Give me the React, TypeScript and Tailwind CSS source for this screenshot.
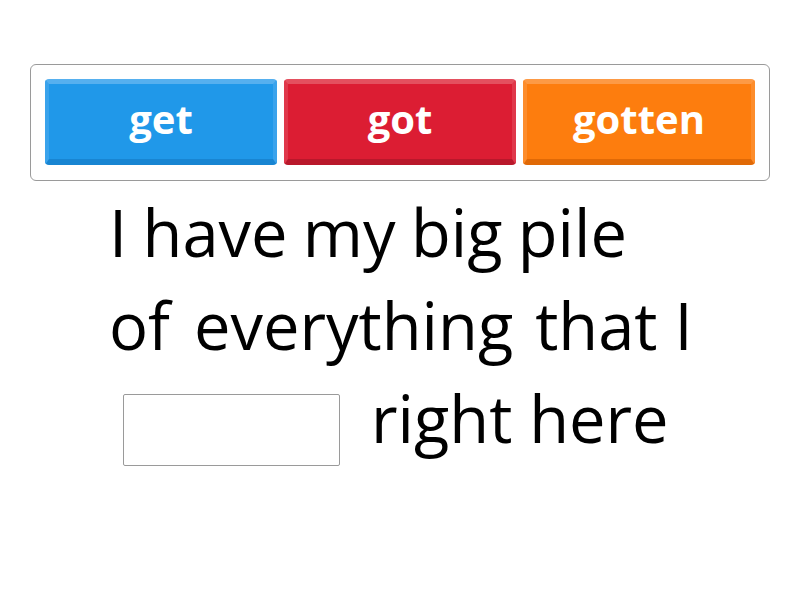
export default function App() {
  const btn =
    "flex-1 h-[86px] rounded-[4px] border-t-[5px] border-x-[4px] border-b-[6px] flex items-center justify-center text-white font-bold text-[40px] leading-none";
  return (
    <div
      className="w-[800px] h-[600px] bg-white pt-[64px]"
      style={{ fontFamily: '"Open Sans", sans-serif' }}
    >
      <div className="mx-[30px] w-[740px] h-[117px] border border-[#9a9a9a] rounded-[6px] px-[14px] pt-[14px] flex gap-[7px]">
        <div className={`${btn} bg-[#2098e9] border-t-[#56b0ef] border-x-[#3aa3ec] border-b-[#1885d2]`}>
          <span className="-mt-[6px]">get</span>
        </div>
        <div className={`${btn} bg-[#dc1d33] border-t-[#e4505f] border-x-[#e0384b] border-b-[#b9182b]`}>
          <span className="-mt-[6px]">got</span>
        </div>
        <div className={`${btn} bg-[#fd7d0e] border-t-[#fd9a45] border-x-[#fd8d2c] border-b-[#e06906]`}>
          <span className="-mt-[6px]">gotten</span>
        </div>
      </div>
      <div className="mt-[5px] pl-[109px] text-black text-[65px] leading-[93px]">
        <div className="h-[93px] whitespace-pre [word-spacing:-1.5px]">I have my big pile</div>
        <div className="h-[93px] whitespace-pre">
          of<span className="inline-block w-[24px]"></span>everything<span className="inline-block w-[22px]"></span>that I
        </div>
        <div className="h-[93px] flex items-start">
          <div className="ml-[14px] mt-[22px] w-[217px] h-[72px] border border-[#9a9a9a] rounded-[2px] bg-white"></div>
          <span className="ml-[31px] whitespace-pre">right here</span>
        </div>
      </div>
    </div>
  );
}
